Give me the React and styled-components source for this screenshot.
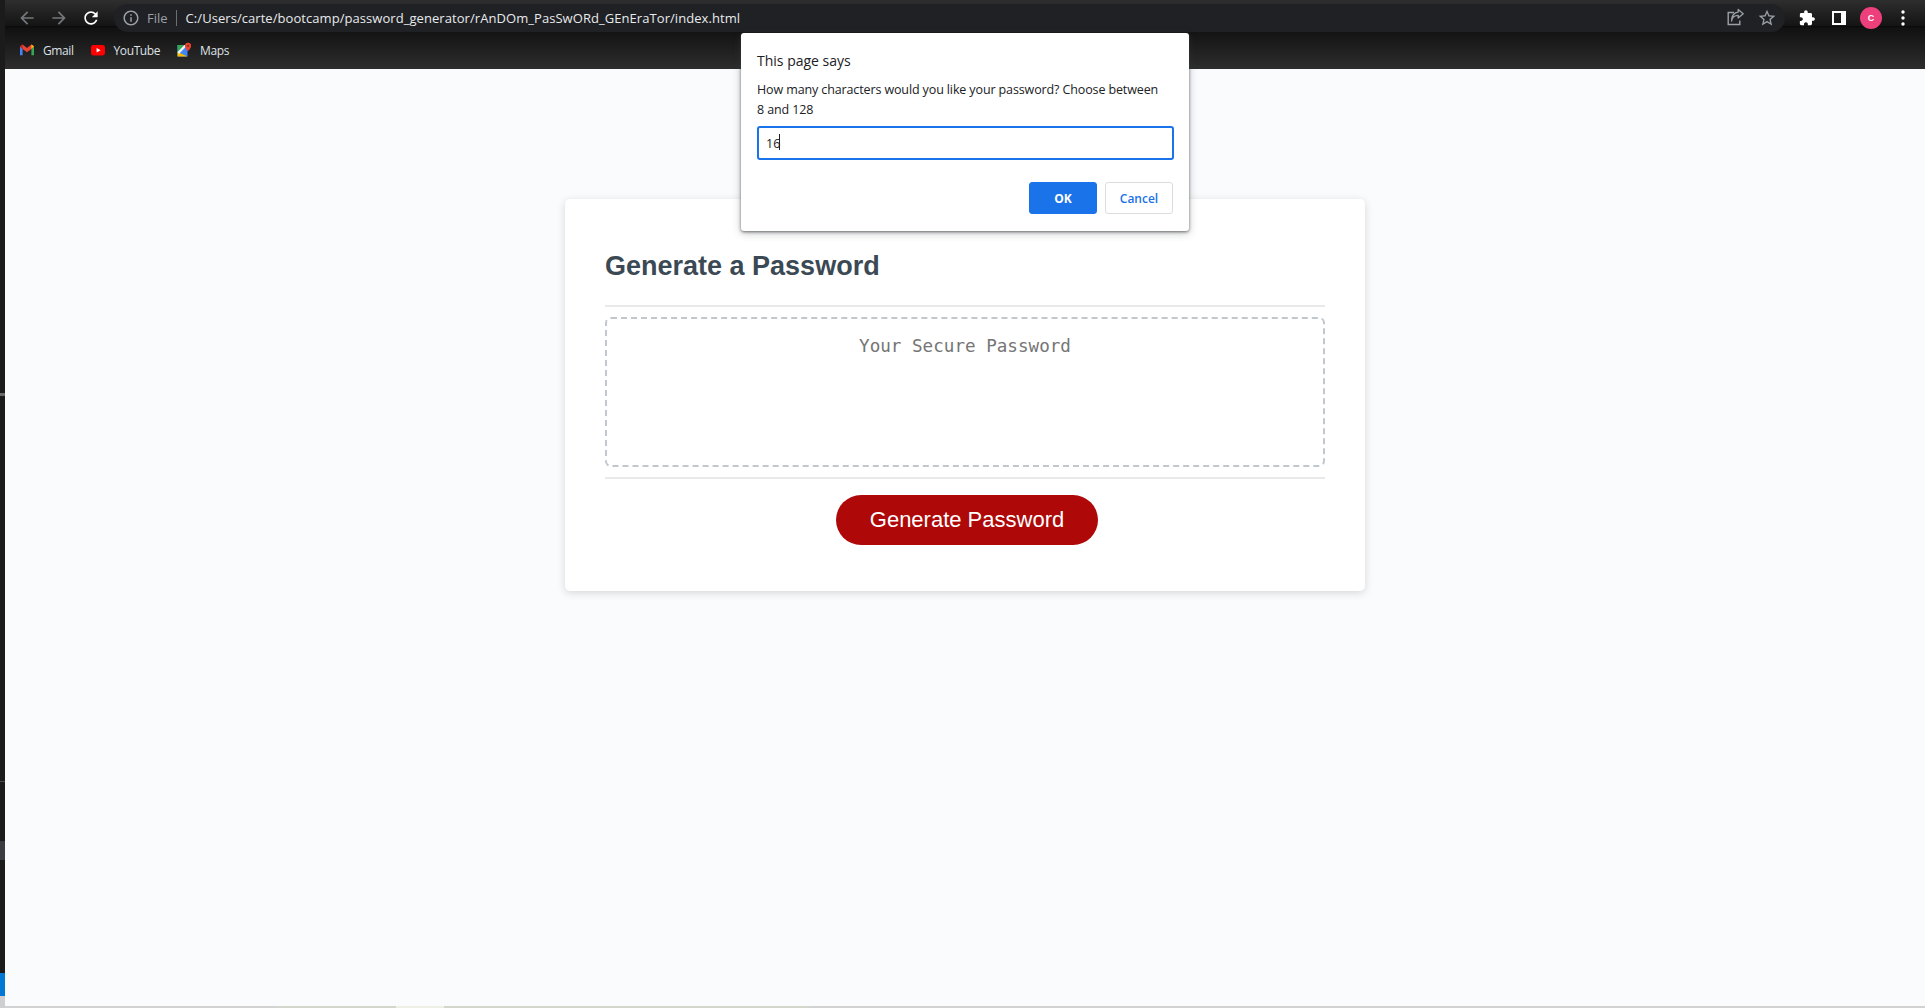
import React from "react";
import styled, { createGlobalStyle } from "styled-components";

const UI_FONT = `"Open Sans", "Noto Sans", Arial, sans-serif`;

const GlobalStyle = createGlobalStyle`
  html, body {
    margin: 0;
    padding: 0;
    height: 100%;
    overflow: hidden;
    background: #1b1b1b;
  }
  * { box-sizing: border-box; }
`;

const Desktop = styled.div`
  display: flex;
  width: 1925px;
  height: 1008px;
  position: relative;
`;

const SideStrip = styled.div`
  display: flex;
  flex-direction: column;
  width: 5px;
  flex: none;
`;

const StripPart = styled.div`
  height: ${(p) => p.$h}px;
  flex: ${(p) => (p.$grow ? 1 : "none")};
  background: ${(p) => p.$c};
`;

const BrowserWindow = styled.div`
  display: flex;
  flex-direction: column;
  flex: 1;
  min-width: 0;
`;

const Toolbar = styled.header`
  height: 69px;
  flex: none;
  background: linear-gradient(#2e2e2e 0, #141414 26px, #0a0a0a 26px, #0c0c0c 27px, #111 28px, #2d2d2d 69px);
`;

const NavRow = styled.div`
  display: flex;
  align-items: center;
  height: 32px;
  padding-top: 4px;
`;

const NavIcon = styled.svg`
  width: ${(p) => p.$size || 20}px;
  height: ${(p) => p.$size || 20}px;
  flex: none;
  fill: ${(p) => p.$c || "#fff"};
`;

const NavSlot = styled.div`
  width: 32px;
  height: 28px;
  display: flex;
  align-items: center;
  justify-content: center;
  flex: none;
`;

const NavButtons = styled.div`
  display: flex;
  margin-left: 6px;
  width: 103px;
`;

const Omnibox = styled.div`
  display: flex;
  align-items: center;
  width: 1671px;
  height: 28px;
  flex: none;
  border-radius: 14px;
  background: #202124;
  padding-left: 8px;
  font: 13px ${UI_FONT};
`;

const FileChip = styled.span`
  color: #9aa0a6;
  margin-left: 7px;
`;

const ChipDivider = styled.span`
  width: 1px;
  height: 16px;
  background: #6b6e73;
  margin: 0 9px 0 8px;
`;

const UrlText = styled.span`
  color: #e8eaed;
  letter-spacing: 0.06px;
  white-space: nowrap;
`;

const OmniActions = styled.div`
  display: flex;
  margin-left: auto;
  margin-right: 2px;
`;

const WindowActions = styled.div`
  display: flex;
  margin-left: 6px;
`;

const Avatar = styled.div`
  width: 22px;
  height: 22px;
  border-radius: 50%;
  background: #ec3f7b;
  color: #fff;
  font: 600 9px "Liberation Sans", Arial, sans-serif;
  display: flex;
  align-items: center;
  justify-content: center;
`;

const BookmarkRow = styled.nav`
  display: flex;
  align-items: center;
  height: 37px;
  padding: 0 0 1px 14px;
  gap: 16px;
`;

const Bookmark = styled.a`
  display: flex;
  align-items: center;
  gap: 8px;
  color: #dfe1e5;
  font: 12px ${UI_FONT};
  letter-spacing: -0.4px;
`;

const BookmarkIcon = styled.svg`
  width: 16px;
  height: 16px;
  flex: none;
`;

const Page = styled.main`
  flex: 1;
  background: #f9fbfd;
  padding-top: 130px;
`;

const Card = styled.section`
  width: 800px;
  margin: 0 auto;
  padding: 30px 40px;
  background: #fff;
  border-radius: 5px;
  box-shadow: rgba(0, 0, 0, 0.15) 0 2px 8px 0;
  color: hsl(206, 17%, 28%);
  font: 18px "Liberation Sans", Arial, sans-serif;
`;

const CardHeader = styled.div`
  &::after {
    content: "";
    display: block;
    height: 2px;
    background: #e7e9eb;
  }
`;

const Title = styled.h2`
  margin: 0;
  padding: 22px 0 23px;
  font-size: 27px;
  line-height: 31px;
  font-weight: 700;
`;

const PasswordBox = styled.textarea`
  display: block;
  appearance: none;
  width: 100%;
  height: 150px;
  margin: 10px 0;
  padding: 17px 15px 83px;
  border: 2px dashed #c0c7cf;
  border-radius: 6px;
  background: #fff;
  font: 17.6px/21px "DejaVu Sans Mono", "Liberation Mono", monospace;
  text-align: center;
  resize: none;
  overflow: hidden;
  outline: none;

  &::placeholder {
    color: #757575;
    opacity: 1;
  }
`;

const CardFooter = styled.div`
  text-align: center;

  &::before {
    content: "";
    display: block;
    height: 2px;
    background: #e7e9eb;
  }
`;

const GenerateButton = styled.button`
  display: inline-block;
  margin: 16px 16px 16px 20px;
  padding: 14px 34px;
  border: none;
  border-radius: 25px;
  background: hsl(360, 91%, 36%);
  color: #fff;
  font: 22px/22px "Liberation Sans", Arial, sans-serif;
  vertical-align: top;
`;

const Dialog = styled.div`
  position: absolute;
  left: 741px;
  top: 33px;
  width: 448px;
  height: 198px;
  padding: 18px 16px 16px;
  background: #fff;
  border-radius: 3px;
  box-shadow: 0 1px 3px rgba(60, 64, 67, 0.7), 0 2px 8px rgba(60, 64, 67, 0.3);
  font-family: ${UI_FONT};
  color: #202124;
`;

const DialogTitle = styled.div`
  font-size: 14px;
  line-height: 20px;
  margin-bottom: 9px;
`;

const DialogText = styled.div`
  max-width: 408px;
  font-size: 12.5px;
  line-height: 20px;
  letter-spacing: -0.12px;
`;

const PromptField = styled.div`
  position: relative;
  width: 417px;
  height: 34px;
  margin-top: 6px;
`;

const PromptInput = styled.input`
  width: 100%;
  height: 100%;
  padding: 0 7px;
  border: 2px solid #1a73e8;
  border-radius: 3px;
  outline: none;
  font: 12.5px ${UI_FONT};
  color: #202124;
  caret-color: transparent;
`;

const Caret = styled.span`
  position: absolute;
  left: 22px;
  top: 8px;
  width: 1px;
  height: 16px;
  background: #202124;
`;

const DialogButtons = styled.div`
  display: flex;
  justify-content: flex-end;
  gap: 8px;
  margin-top: 22px;
`;

const DialogButton = styled.button`
  width: 68px;
  height: 32px;
  border-radius: 3px;
  font: ${(p) => (p.$primary ? 700 : 600)} 12px ${UI_FONT};
  border: 1px solid ${(p) => (p.$primary ? "#1a73e8" : "#dadce0")};
  background: ${(p) => (p.$primary ? "#1a73e8" : "#fff")};
  color: ${(p) => (p.$primary ? "#fff" : "#1a73e8")};
`;

const ScreenEdge = styled.div`
  height: 2px;
  flex: none;
  display: flex;
`;

const EdgePart = styled.div`
  height: 2px;
  width: ${(p) => (p.$w ? `${p.$w}px` : "auto")};
  flex: ${(p) => (p.$w ? "none" : 1)};
  background: ${(p) => p.$c};
`;

const Back = () => (
  <NavIcon viewBox="0 0 24 24" $c="#74777c">
    <path d="M20 11H7.83l5.59-5.59L12 4l-8 8 8 8 1.41-1.41L7.83 13H20v-2z" />
  </NavIcon>
);

const Forward = () => (
  <NavIcon viewBox="0 0 24 24" $c="#74777c">
    <path d="M12 4l-1.41 1.41L16.17 11H4v2h12.17l-5.58 5.59L12 20l8-8z" />
  </NavIcon>
);

const Reload = () => (
  <NavIcon viewBox="0 0 24 24">
    <path d="M17.65 6.35C16.2 4.9 14.21 4 12 4c-4.42 0-7.99 3.58-7.99 8s3.57 8 7.99 8c3.73 0 6.84-2.55 7.73-6h-2.08c-.82 2.33-3.04 4-5.65 4-3.31 0-6-2.69-6-6s2.69-6 6-6c1.66 0 3.14.69 4.22 1.78L13 11h7V4l-2.35 2.35z" />
  </NavIcon>
);

const Info = () => (
  <NavIcon viewBox="0 0 24 24" $c="#9aa0a6" $size={18}>
    <path d="M11 7h2v2h-2zm0 4h2v6h-2zm1-9C6.48 2 2 6.48 2 12s4.48 10 10 10 10-4.48 10-10S17.52 2 12 2zm0 18c-4.41 0-8-3.59-8-8s3.59-8 8-8 8 3.59 8 8-3.59 8-8 8z" />
  </NavIcon>
);

const Share = () => (
  <NavIcon viewBox="0 0 20 20" $c="none">
    <path d="M9 4.5H3.2v12h11.6v-4" stroke="#9aa0a6" strokeWidth="1.4" />
    <path d="M6.6 13c.6-3.6 3-5.6 6.6-5.6V10l5-4.3-5-4.2v2.6C9 4.3 6.4 8 6.6 13z" stroke="#9aa0a6" strokeWidth="1.3" strokeLinejoin="round" />
  </NavIcon>
);

const Star = () => (
  <NavIcon viewBox="0 0 24 24" $c="#9aa0a6">
    <path d="M22 9.24l-7.19-.62L12 2 9.19 8.63 2 9.24l5.46 4.73L5.82 21 12 17.27 18.18 21l-1.63-7.03L22 9.24zM12 15.4l-3.76 2.27 1-4.28-3.32-2.88 4.38-.38L12 6.1l1.71 4.04 4.38.38-3.32 2.88 1 4.28L12 15.4z" />
  </NavIcon>
);

const Puzzle = () => (
  <NavIcon viewBox="-2 -2 28 28">
    <path d="M20.5 11H19V7c0-1.1-.9-2-2-2h-4V3.5C13 2.12 11.88 1 10.5 1S8 2.12 8 3.5V5H4c-1.1 0-1.99.9-1.99 2v3.8H3.5c1.49 0 2.7 1.21 2.7 2.7s-1.21 2.7-2.7 2.7H2V20c0 1.1.9 2 2 2h3.8v-1.5c0-1.49 1.21-2.7 2.7-2.7 1.49 0 2.7 1.21 2.7 2.7V22H17c1.1 0 2-.9 2-2v-4h1.5c1.38 0 2.5-1.12 2.5-2.5S21.88 11 20.5 11z" />
  </NavIcon>
);

const SidePanel = () => (
  <NavIcon viewBox="0 0 20 20">
    <path fillRule="evenodd" d="M3 3h14v14H3zM5 5v10h7V5z" />
  </NavIcon>
);

const Dots = () => (
  <NavIcon viewBox="0 0 20 20">
    <circle cx="10" cy="4" r="1.7" />
    <circle cx="10" cy="10" r="1.7" />
    <circle cx="10" cy="16" r="1.7" />
  </NavIcon>
);

const GmailIcon = () => (
  <BookmarkIcon viewBox="0 0 16 16">
    <path d="M1 4.2v9h2.6V7z" fill="#4285f4" />
    <path d="M15 4.2v9h-2.6V7z" fill="#34a853" />
    <path d="M1 4.2 3.6 2.6 8 6l4.4-3.4L15 4.2 12.4 7 8 10.3 3.6 7z" fill="#ea4335" />
    <path d="M12.4 2.6 15 4.2 12.4 7z" fill="#fbbc04" />
    <path d="M1 4.2l2.6-1.6V7z" fill="#c5221f" />
  </BookmarkIcon>
);

const YoutubeIcon = () => (
  <BookmarkIcon viewBox="0 0 16 16">
    <rect x="1" y="3" width="14" height="10.4" rx="2.6" fill="#f00" />
    <path d="M6.6 5.9v4.6l4-2.3z" fill="#fff" />
  </BookmarkIcon>
);

const MapsIcon = () => (
  <BookmarkIcon viewBox="0 0 16 16">
    <path d="M1.5 3h10v11.5h-10z" fill="#4285f4" />
    <path d="M1.5 3h7L1.5 10z" fill="#34a853" />
    <path d="M1.5 10v4.5h10z" fill="#fbbc04" />
    <path d="M1.5 10 8.5 3h3L3 12z" fill="#f1f3f4" />
    <path d="M12 .8a3.1 3.1 0 0 0-3.1 3.1c0 2.2 3.1 5.1 3.1 5.1s3.1-2.9 3.1-5.1A3.1 3.1 0 0 0 12 .8z" fill="#ea4335" />
    <circle cx="12" cy="3.9" r="1.1" fill="#a52714" />
  </BookmarkIcon>
);

const stripParts = [
  { h: 393, c: "#1b1b1b" },
  { h: 3, c: "#6a6a6a" },
  { h: 385, c: "#1b1b1b" },
  { h: 1, c: "#4c4c4c" },
  { h: 59, c: "#1b1b1b" },
  { h: 19, c: "#3b3b42" },
  { h: 113, c: "#1b1b1b" },
  { h: 23, c: "#0078d4" },
  { grow: true, c: "#cfcfcf" },
];

export default function App() {
  return (
    <Desktop>
      <GlobalStyle />
      <SideStrip>
        {stripParts.map((part, i) => (
          <StripPart key={i} $h={part.h} $grow={part.grow} $c={part.c} />
        ))}
      </SideStrip>
      <BrowserWindow>
        <Toolbar>
          <NavRow>
            <NavButtons>
              <NavSlot><Back /></NavSlot>
              <NavSlot><Forward /></NavSlot>
              <NavSlot><Reload /></NavSlot>
            </NavButtons>
            <Omnibox>
              <Info />
              <FileChip>File</FileChip>
              <ChipDivider />
              <UrlText>C:/Users/carte/bootcamp/password_generator/rAnDOm_PasSwORd_GEnEraTor/index.html</UrlText>
              <OmniActions>
                <NavSlot><Share /></NavSlot>
                <NavSlot><Star /></NavSlot>
              </OmniActions>
            </Omnibox>
            <WindowActions>
              <NavSlot><Puzzle /></NavSlot>
              <NavSlot><SidePanel /></NavSlot>
              <NavSlot><Avatar>C</Avatar></NavSlot>
              <NavSlot><Dots /></NavSlot>
            </WindowActions>
          </NavRow>
          <BookmarkRow>
            <Bookmark><GmailIcon />Gmail</Bookmark>
            <Bookmark><YoutubeIcon />YouTube</Bookmark>
            <Bookmark><MapsIcon />Maps</Bookmark>
          </BookmarkRow>
        </Toolbar>
        <Page>
          <Card>
            <CardHeader>
              <Title>Generate a Password</Title>
            </CardHeader>
            <PasswordBox readOnly placeholder="Your Secure Password" />
            <CardFooter>
              <GenerateButton>Generate Password</GenerateButton>
            </CardFooter>
          </Card>
        </Page>
        <ScreenEdge>
          <EdgePart $w={271} $c="#d2d2d2" />
          <EdgePart $w={120} $c="#d3d6cb" />
          <EdgePart $w={48} $c="#eef0e6" />
          <EdgePart $w={366} $c="#d3d6cb" />
          <EdgePart $c="#d2d2d2" />
        </ScreenEdge>
      </BrowserWindow>
      <Dialog>
        <DialogTitle>This page says</DialogTitle>
        <DialogText>How many characters would you like your password? Choose between 8 and 128</DialogText>
        <PromptField>
          <PromptInput readOnly value="16" />
          <Caret />
        </PromptField>
        <DialogButtons>
          <DialogButton $primary>OK</DialogButton>
          <DialogButton>Cancel</DialogButton>
        </DialogButtons>
      </Dialog>
    </Desktop>
  );
}
